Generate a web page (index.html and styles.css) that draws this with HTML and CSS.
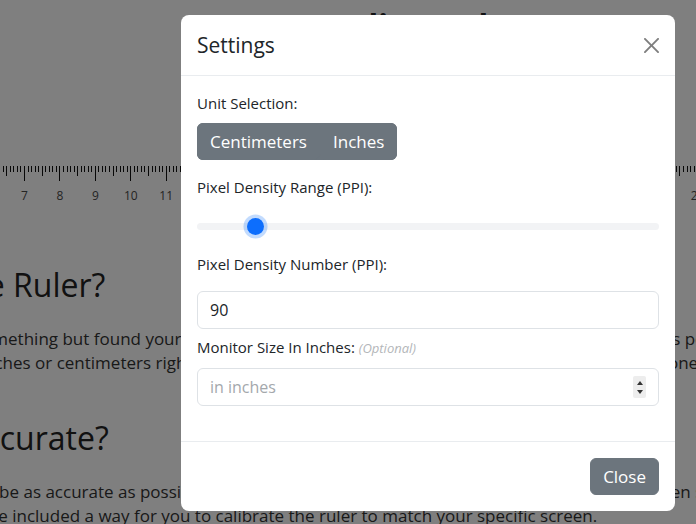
FILE: index.html
```html
<!DOCTYPE html>
<html lang="en">
<head>
<meta charset="utf-8">
<title>Online Ruler</title>
<link rel="stylesheet" href="styles.css">
</head>
<body>
<div class="page">
  <h1 class="title">Online Ruler</h1>
  <div class="ruler">
    <div class="ticks"></div>
    <div class="nums">
      <span>0</span><span>1</span><span>2</span><span>3</span><span>4</span><span>5</span><span>6</span><span>7</span><span>8</span><span>9</span><span>10</span><span>11</span><span>12</span><span>13</span><span>14</span><span>15</span><span>16</span><span>17</span><span>18</span><span>19</span><span>20</span><span>21</span><span>22</span><span>23</span><span>24</span><span>25</span><span>26</span><span>27</span><span>28</span><span>29</span><span>30</span>
    </div>
  </div>
  <section class="article">
    <h2>How to Use the Ruler?</h2>
    <p>Ever needed to measure something but found yourself without a ruler at hand? This free and simple online ruler is perfect<br>Quickly measure items in inches or centimeters right on your screen, whether you are on a laptop, tablet, or a phone.</p>
    <h2 class="h2b">Is This Ruler Accurate?</h2>
    <p>We've designed our ruler to be as accurate as possible, but the pixel density of displays can vary quite a lot between screens,<br>Because screens differ, we've included a way for you to calibrate the ruler to match your specific screen.</p>
  </section>
</div>

<div class="backdrop">
  <div class="modal">
    <div class="modal-header">
      <h5 class="modal-title">Settings</h5>
      <button class="btn-close" aria-label="Close">
        <svg viewBox="0 0 16 16" width="15" height="15"><path d="M.293.293a1 1 0 0 1 1.414 0L8 6.586 14.293.293a1 1 0 1 1 1.414 1.414L9.414 8l6.293 6.293a1 1 0 0 1-1.414 1.414L8 9.414l-6.293 6.293a1 1 0 0 1-1.414-1.414L6.586 8 .293 1.707a1 1 0 0 1 0-1.414z"/></svg>
      </button>
    </div>
    <div class="modal-body">
      <label class="lbl">Unit Selection:</label>
      <div class="btn-group">
        <button class="seg">Centimeters</button>
        <button class="seg">Inches</button>
      </div>
      <label class="lbl lbl-range">Pixel Density Range (PPI):</label>
      <input type="range" class="range" min="0" max="800" value="90">
      <label class="lbl lbl-num">Pixel Density Number (PPI):</label>
      <div class="field"><input class="field-input" type="text" value="90"></div>
      <label class="lbl lbl-mon">Monitor Size In Inches: <span class="opt">(Optional)</span></label>
      <div class="field field-mon">
        <input class="field-input" type="text" placeholder="in inches">
        <span class="spin"><span class="up"></span><span class="down"></span></span>
      </div>
    </div>
    <div class="modal-footer">
      <button class="btn">Close</button>
    </div>
  </div>
</div>
</body>
</html>
```
FILE: styles.css
```css
* { box-sizing: border-box; }
html, body { margin: 0; padding: 0; }
body {
  width: 696px;
  height: 524px;
  overflow: hidden;
  background: #fff;
  font-family: "Open Sans", "Noto Sans", sans-serif;
  color: #333;
  position: relative;
}
.page { width: 696px; }
.title {
  margin: 0 0 0 322px;
  padding-top: 6px;
  font-size: 32px;
  line-height: 40px;
  font-weight: 700;
  color: #222;
  white-space: nowrap;
}
.ruler {
  margin: 120px 0 0 -224px;
  width: 1300px;
}
.ticks {
  height: 16px;
  background:
    repeating-linear-gradient(to right, #111 0 1px, transparent 1px 35.43px) 0 0 / 100% 15px no-repeat,
    repeating-linear-gradient(to right, #111 0 1px, transparent 1px 17.715px) 0 0 / 100% 10px no-repeat,
    repeating-linear-gradient(to right, #111 0 1px, transparent 1px 3.543px) 0 0 / 100% 6px no-repeat;
}
.nums {
  display: flex;
  margin: 6px 0 0 -17.2px;
  font-size: 12px;
  line-height: 16px;
  color: #4a4a4a;
}
.nums span { flex: 0 0 35.43px; text-align: center; }
.article {
  margin-left: -224px;
  width: 1300px;
  white-space: nowrap;
}
.article h2 {
  margin: 62px 0 0;
  font-size: 32px;
  line-height: 38px;
  font-weight: 400;
  color: #222;
}
.article p {
  margin: 23px 0 0;
  font-size: 17px;
  line-height: 23.5px;
}
.article .h2b { margin-top: 45px; }

/* modal */
.backdrop {
  position: absolute;
  inset: 0;
  background: rgba(0, 0, 0, 0.5);
}
.modal {
  margin: 15px 0 0 181px;
  width: 494px;
  background: #fff;
  border-radius: 8px;
  color: #212529;
}
.modal-header {
  display: flex;
  align-items: center;
  justify-content: space-between;
  padding: 15px 16px;
  border-bottom: 1px solid #e9ecef;
}
.modal-title {
  margin: 0;
  font-size: 21px;
  line-height: 30px;
  font-weight: 400;
}
.btn-close {
  border: 0;
  background: none;
  padding: 0;
  width: 15px;
  height: 15px;
  display: flex;
  opacity: 0.5;
}
.btn-close svg { fill: #000; }
.modal-body {
  display: flex;
  flex-direction: column;
  align-items: flex-start;
  padding: 16px 16px 35px;
}
.lbl {
  font-size: 15px;
  line-height: 22px;
}
.btn-group {
  display: flex;
  margin-top: 9px;
  background: #6c757d;
  border-radius: 6px;
}
.seg, .btn {
  border: 1px solid #6c757d;
  background: #6c757d;
  color: #fff;
  font-family: inherit;
  font-size: 17px;
  line-height: 24px;
  padding: 5px 12px;
  border-radius: 6px;
}
.seg { height: 37px; }
.lbl-range { margin-top: 16px; }
.range {
  -webkit-appearance: none;
  appearance: none;
  margin: 18px 0 0;
  width: 100%;
  height: 20px;
  background: transparent;
}
.range::-webkit-slider-runnable-track {
  height: 7px;
  background: #f2f3f5;
  border-radius: 4px;
}
.range::-webkit-slider-thumb {
  -webkit-appearance: none;
  width: 17px;
  height: 17px;
  margin-top: -5px;
  border-radius: 50%;
  background: #0d6efd;
  box-shadow: 0 0 0 3.5px rgba(13, 110, 253, 0.25);
}
.lbl-num { margin-top: 17px; }
.field {
  display: flex;
  align-items: center;
  width: 100%;
  height: 38px;
  margin-top: 16px;
  border: 1px solid #dee2e6;
  border-radius: 6px;
  padding: 0 12px;
}
.field-input {
  flex: 1;
  border: 0;
  outline: none;
  padding: 0;
  font-family: inherit;
  font-size: 16px;
  color: #212529;
  background: transparent;
}
.field-input::placeholder { color: #a4a8ac; }
.lbl-mon { margin-top: 7px; }
.opt {
  font-style: italic;
  font-size: 13px;
  color: #b3b6b9;
}
.field-mon { margin-top: 9px; padding-right: 12px; }
.spin {
  display: flex;
  flex-direction: column;
  align-items: center;
  justify-content: center;
  gap: 5px;
  width: 13px;
  height: 22px;
  background: #ededed;
  border-radius: 2px;
}
.spin .up, .spin .down {
  width: 0;
  height: 0;
  border-left: 3.5px solid transparent;
  border-right: 3.5px solid transparent;
}
.spin .up { border-bottom: 4px solid #333; }
.spin .down { border-top: 4px solid #333; }
.modal-footer {
  display: flex;
  justify-content: flex-end;
  padding: 16px;
  border-top: 1px solid #e9ecef;
}
.btn { height: 37px; padding: 5px 12px; }
```
